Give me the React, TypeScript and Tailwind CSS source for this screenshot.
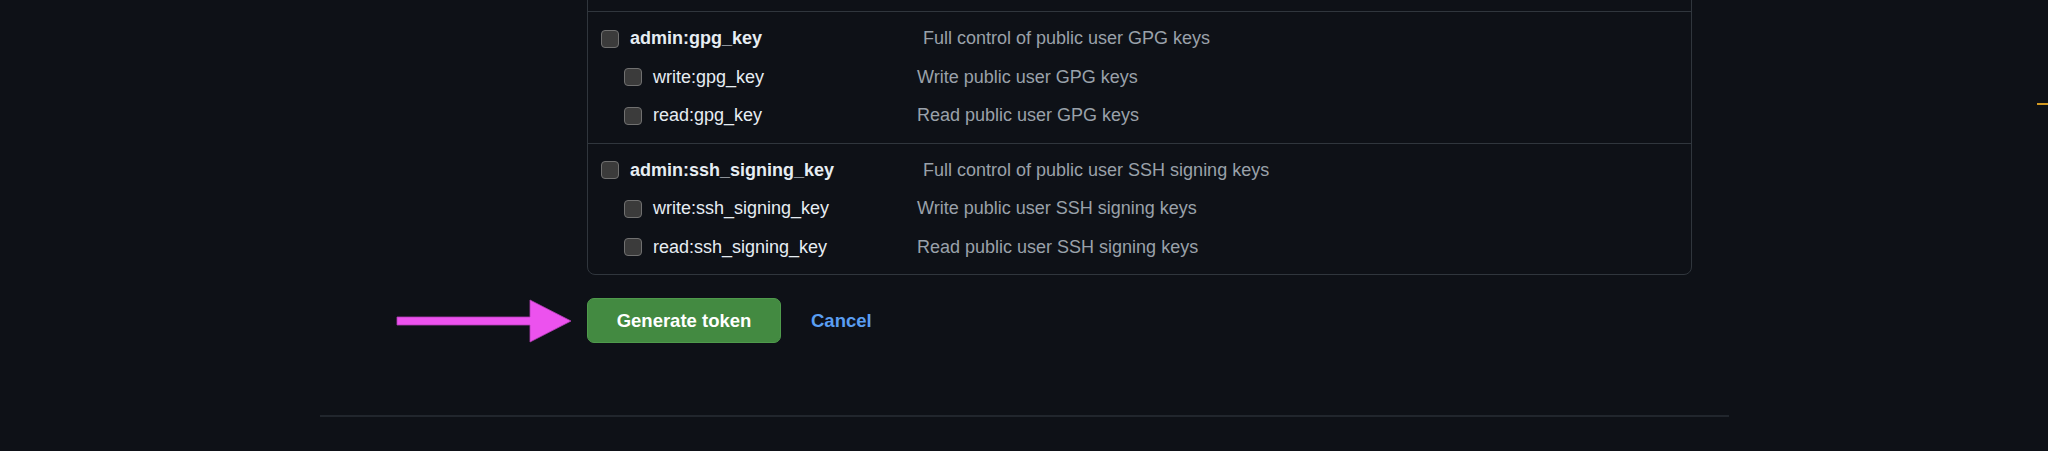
import React from "react";

type Scope = { name: string; description: string };

type ScopeGroup = { parent: Scope; children: Scope[] };

const GROUPS: ScopeGroup[] = [
  {
    parent: { name: "admin:gpg_key", description: "Full control of public user GPG keys" },
    children: [
      { name: "write:gpg_key", description: "Write public user GPG keys" },
      { name: "read:gpg_key", description: "Read public user GPG keys" },
    ],
  },
  {
    parent: {
      name: "admin:ssh_signing_key",
      description: "Full control of public user SSH signing keys",
    },
    children: [
      { name: "write:ssh_signing_key", description: "Write public user SSH signing keys" },
      { name: "read:ssh_signing_key", description: "Read public user SSH signing keys" },
    ],
  },
];

function Checkbox() {
  return (
    <input
      type="checkbox"
      className="h-[18px] w-[18px] shrink-0 appearance-none rounded-[4px] border border-[#707070] bg-[#3b3b3b]"
    />
  );
}

function ScopeRow({ scope, child }: { scope: Scope; child?: boolean }) {
  return (
    <label className={`flex h-[38.5px] items-center ${child ? "pl-[36px]" : "pl-[13px]"}`}>
      <Checkbox />
      <span
        className={`ml-[11px] shrink-0 text-[#e6edf3] ${
          child ? "w-[264px] font-normal" : "w-[293px] font-bold"
        }`}
      >
        {scope.name}
      </span>
      <span className="text-[#9aa1aa]">{scope.description}</span>
    </label>
  );
}

function Arrow() {
  return (
    <svg
      width="176"
      height="44"
      viewBox="0 0 176 44"
      className="absolute right-full top-1/2 mr-[15px] -translate-y-1/2"
      aria-hidden="true"
    >
      <path
        d="M1 18 H134 V1 L175 22 L134 43 V26 H1 Z"
        fill="#ec52ee"
        stroke="#b23cb6"
        strokeWidth="0.8"
        strokeLinejoin="miter"
      />
    </svg>
  );
}

export default function App() {
  return (
    <div
      className="relative h-[451px] w-[2048px] overflow-hidden bg-[#0e1117] text-[18px] leading-[1.4]"
      style={{ fontFamily: '"Liberation Sans", Arial, sans-serif' }}
    >
      <span className="absolute right-0 top-[103px] h-[2px] w-[11px] bg-[#d29922]" />

      <div className="ml-[320px] w-[1409px]">
        <div className="pl-[267px]">
          {/* scopes table, its upper part is scrolled off */}
          <div className="-mt-[10px] w-[1105px] rounded-[8px] border border-[#30363d]">
            <div className="h-[20px]" />
            {GROUPS.map((g) => (
              <div key={g.parent.name} className="border-t border-[#30363d] py-[7.5px]">
                <ScopeRow scope={g.parent} />
                {g.children.map((c) => (
                  <ScopeRow key={c.name} scope={c} child />
                ))}
              </div>
            ))}
          </div>

          <div className="mt-[23px] flex items-center">
            <div className="relative">
              <Arrow />
              <button className="flex h-[45px] w-[194px] items-center justify-center rounded-[7px] border border-[#4f9a4c] bg-[#438a41] text-[18.5px] font-bold text-white">
                Generate token
              </button>
            </div>
            <button className="ml-[30px] text-[18.5px] font-semibold text-[#5a9ef2]">Cancel</button>
          </div>
        </div>

        <div className="mt-[72px] border-t-[2px] border-[#21262d]" />
      </div>
    </div>
  );
}
